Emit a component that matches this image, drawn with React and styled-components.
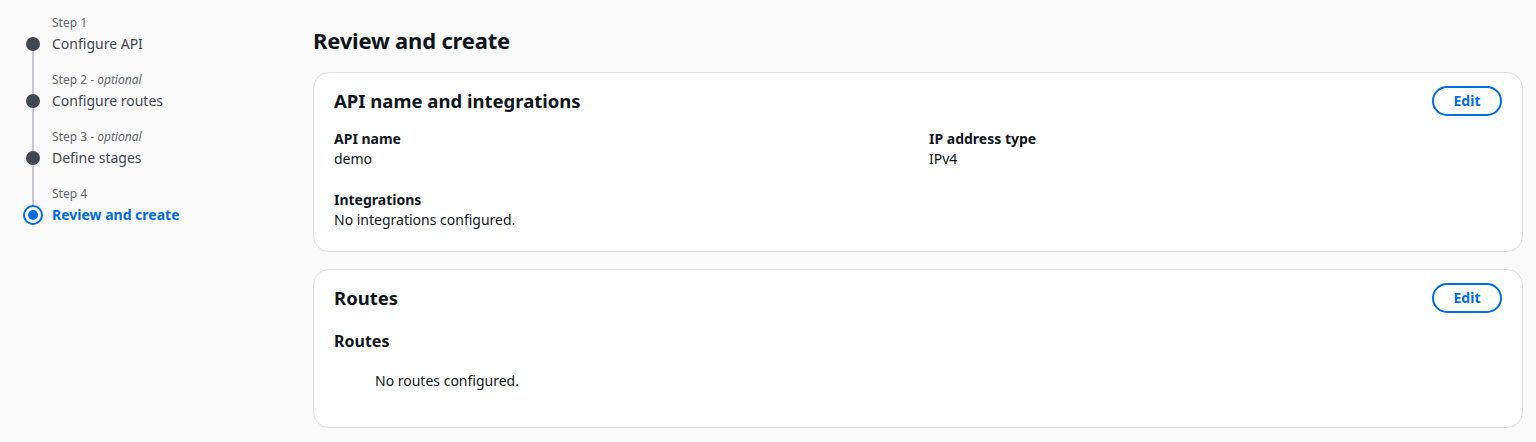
import React from "react";
import styled, { createGlobalStyle } from "styled-components";

const GlobalStyle = createGlobalStyle`
  html, body { margin: 0; padding: 0; background: #fafafa; }
  body {
    font-family: "Noto Sans", "Open Sans", Arial, sans-serif;
    color: #0f141a;
    -webkit-font-smoothing: antialiased;
  }
  * { box-sizing: border-box; }
`;

const Page = styled.div`
  display: grid;
  grid-template-columns: 313px 1fr;
  padding-right: 13px;
  min-height: 442px;
  background: #fafafa;
`;

const Nav = styled.nav`
  padding: 15px 0 0 23px;
  display: flex;
  flex-direction: column;
`;

const StepItem = styled.div`
  display: grid;
  grid-template-columns: 20px 1fr;
  column-gap: 9px;
  grid-template-rows: auto auto;
`;

const LineCell = styled.div`
  grid-column: 1;
  grid-row: 1;
  display: flex;
  justify-content: center;
  &::before {
    content: "";
    width: 2px;
    background: ${(p) => (p.$show ? "#c6c6cd" : "transparent")};
  }
`;

const StepLabel = styled.div`
  grid-column: 2;
  grid-row: 1;
  font-size: 12px;
  line-height: 16px;
  color: #656871;
  margin-bottom: 3px;
  padding-top: ${(p) => (p.$first ? "0" : "18px")};
  em { font-style: italic; }
`;

const DotCell = styled.div`
  grid-column: 1;
  grid-row: 2;
  display: flex;
  flex-direction: column;
  align-items: center;
  &::before, &::after {
    content: "";
    flex: 1 1 0;
    width: 2px;
  }
  &::before { background: ${(p) => (p.$first ? "transparent" : "#c6c6cd")}; }
  &::after { background: ${(p) => (p.$last ? "transparent" : "#c6c6cd")}; }
`;

const Dot = styled.span`
  display: block;
  width: 14px;
  height: 14px;
  border-radius: 50%;
  background: #424650;
  flex: none;
`;

const ActiveDot = styled.span`
  width: 20px;
  height: 20px;
  border-radius: 50%;
  border: 2px solid #006ce0;
  background: #fff;
  display: flex;
  align-items: center;
  justify-content: center;
  flex: none;
  &::after {
    content: "";
    width: 10px;
    height: 10px;
    border-radius: 50%;
    background: #006ce0;
  }
`;

const StepTitle = styled.div`
  grid-column: 2;
  grid-row: 2;
  font-size: 14px;
  line-height: 20px;
  color: ${(p) => (p.$active ? "#006ce0" : "#424650")};
  font-weight: ${(p) => (p.$active ? 700 : 400)};
`;

const Main = styled.main`
  display: flex;
  flex-direction: column;
  padding-top: 25px;
`;

const PageTitle = styled.h1`
  margin: 0 0 17px;
  font-size: 22px;
  line-height: 30px;
  font-weight: 700;
  letter-spacing: -0.2px;
`;

const Cards = styled.div`
  display: flex;
  flex-direction: column;
  gap: 17px;
`;

const Card = styled.section`
  background: #fff;
  border: 1px solid #dedee3;
  border-radius: 16px;
  padding: 13px 20px ${(p) => p.$pb || "21px"};
`;

const CardHeader = styled.div`
  display: flex;
  align-items: center;
  justify-content: space-between;
  height: 30px;
`;

const CardTitle = styled.h2`
  margin: 0;
  font-size: 18.5px;
  line-height: 24px;
  font-weight: 700;
`;

const EditButton = styled.button`
  width: 70px;
  height: 30px;
  border: 2px solid #006ce0;
  border-radius: 20px;
  background: #fff;
  color: #006ce0;
  font-family: inherit;
  font-size: 14px;
  font-weight: 700;
  line-height: 20px;
  padding: 0;
  cursor: pointer;
`;

const Grid = styled.div`
  display: grid;
  grid-template-columns: 1fr 1fr;
  column-gap: 22px;
  row-gap: 21px;
  margin-top: 13px;
`;

const Field = styled.div`
  display: flex;
  flex-direction: column;
`;

const Label = styled.div`
  font-size: 14px;
  line-height: 20px;
  font-weight: 700;
`;

const Value = styled.div`
  font-size: 14px;
  line-height: 20px;
`;

const SubTitle = styled.h3`
  margin: 17px 0 0;
  font-size: 16px;
  line-height: 22px;
  font-weight: 700;
`;

const Empty = styled.div`
  margin-top: 19px;
  padding-left: 41px;
  font-size: 14px;
  line-height: 20px;
`;

const steps = [
  { label: "Step 1", title: "Configure API" },
  { label: "Step 2", optional: true, title: "Configure routes" },
  { label: "Step 3", optional: true, title: "Define stages" },
  { label: "Step 4", title: "Review and create", active: true },
];

export default function App() {
  return (
    <>
      <GlobalStyle />
      <Page>
        <Nav>
          {steps.map((s, i) => (
            <StepItem key={s.label}>
              <LineCell $show={i > 0} />
              <StepLabel $first={i === 0}>
                {s.label}
                {s.optional && (
                  <>
                    {" - "}
                    <em>optional</em>
                  </>
                )}
              </StepLabel>
              <DotCell $first={i === 0} $last={i === steps.length - 1}>
                {s.active ? <ActiveDot /> : <Dot />}
              </DotCell>
              <StepTitle $active={s.active}>{s.title}</StepTitle>
            </StepItem>
          ))}
        </Nav>
        <Main>
          <PageTitle>Review and create</PageTitle>
          <Cards>
            <Card>
              <CardHeader>
                <CardTitle>API name and integrations</CardTitle>
                <EditButton>Edit</EditButton>
              </CardHeader>
              <Grid>
                <Field>
                  <Label>API name</Label>
                  <Value>demo</Value>
                </Field>
                <Field>
                  <Label>IP address type</Label>
                  <Value>IPv4</Value>
                </Field>
                <Field>
                  <Label>Integrations</Label>
                  <Value>No integrations configured.</Value>
                </Field>
              </Grid>
            </Card>
            <Card $pb="36px">
              <CardHeader>
                <CardTitle>Routes</CardTitle>
                <EditButton>Edit</EditButton>
              </CardHeader>
              <SubTitle>Routes</SubTitle>
              <Empty>No routes configured.</Empty>
            </Card>
          </Cards>
        </Main>
      </Page>
    </>
  );
}
